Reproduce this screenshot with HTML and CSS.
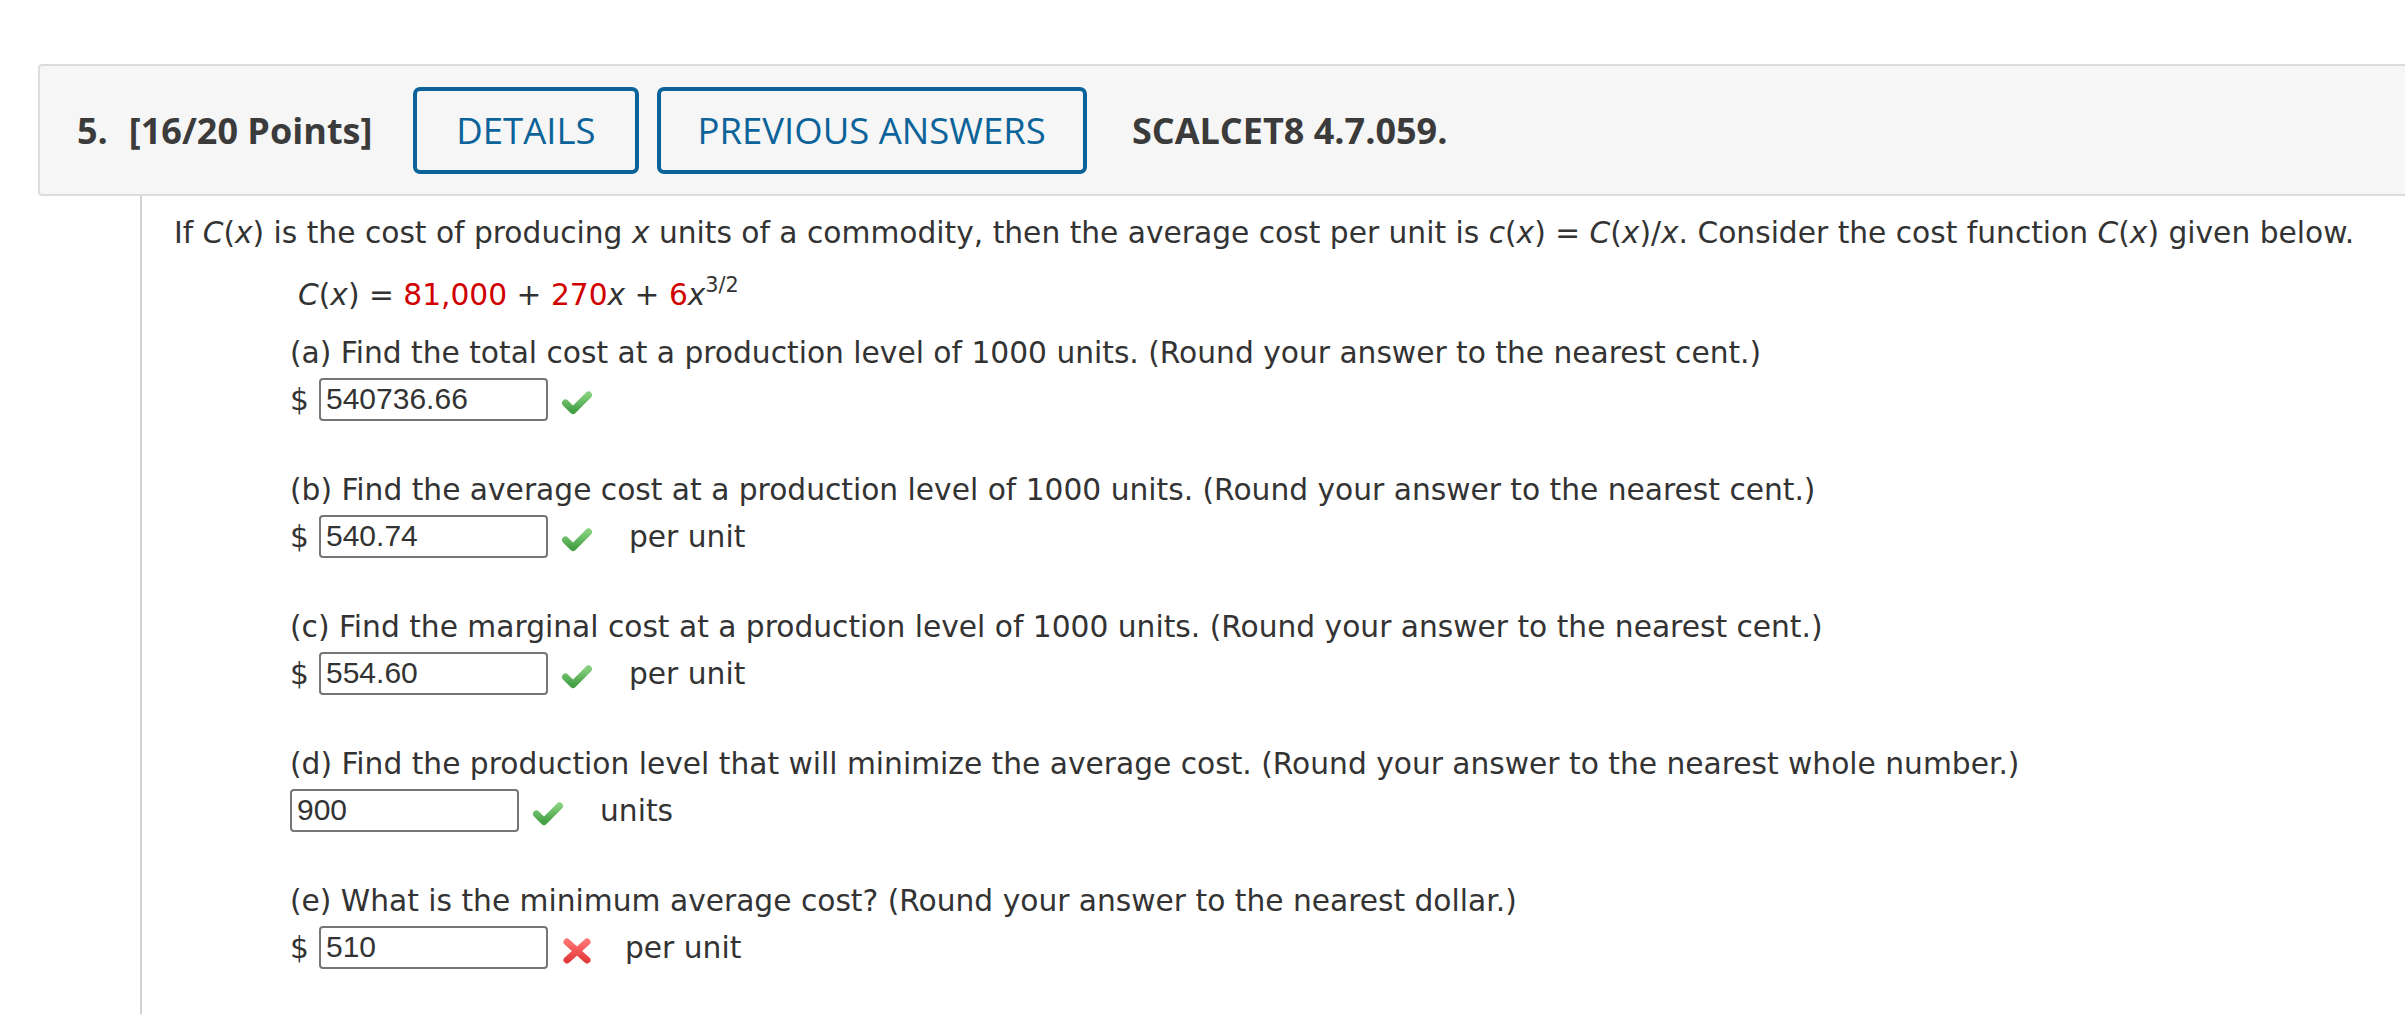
FILE: index.html
```html
<!DOCTYPE html>
<html lang="en">
<head>
    <meta charset="UTF-8">
    <meta name="viewport" content="width=device-width, initial-scale=1.0">
    <title>SCALCET8 4.7.059</title>
    <link rel="stylesheet" href="styles.css">
</head>
<body>
    <div class="question">
        <div class="q-header">
            <span class="q-num">5.</span>
            <span class="q-points">[16/20 Points]</span>
            <button class="q-btn">DETAILS</button>
            <button class="q-btn last">PREVIOUS ANSWERS</button>
            <span class="q-ref">SCALCET8 4.7.059.</span>
        </div>

        <div class="q-body">
            <p class="intro">If <i>C</i>(<i>x</i>) is the cost of producing <i>x</i> units of a commodity, then the average cost per unit is <i>c</i>(<i>x</i>) = <i>C</i>(<i>x</i>)/<i>x</i>. Consider the cost function <i>C</i>(<i>x</i>) given below.</p>

            <p class="formula"><i>C</i>(<i>x</i>) = <span class="num">81,000</span> + <span class="num">270</span><i>x</i> + <span class="num">6</span><i>x</i><sup>3/2</sup></p>

            <div class="parts">
                <div class="part">
                    <p class="prompt">(a) Find the total cost at a production level of 1000 units. (Round your answer to the nearest cent.)</p>
                    <div class="answer-row">
                        <span class="pre">$</span>
                        <input class="answer" type="text" value="540736.66" readonly>
                        <svg class="mark" width="32" height="26" viewBox="0 0 32 26"><use href="#check"/></svg>
                    </div>
                </div>

                <div class="part">
                    <p class="prompt">(b) Find the average cost at a production level of 1000 units. (Round your answer to the nearest cent.)</p>
                    <div class="answer-row">
                        <span class="pre">$</span>
                        <input class="answer" type="text" value="540.74" readonly>
                        <svg class="mark" width="32" height="26" viewBox="0 0 32 26"><use href="#check"/></svg>
                        <span class="post">per unit</span>
                    </div>
                </div>

                <div class="part">
                    <p class="prompt">(c) Find the marginal cost at a production level of 1000 units. (Round your answer to the nearest cent.)</p>
                    <div class="answer-row">
                        <span class="pre">$</span>
                        <input class="answer" type="text" value="554.60" readonly>
                        <svg class="mark" width="32" height="26" viewBox="0 0 32 26"><use href="#check"/></svg>
                        <span class="post">per unit</span>
                    </div>
                </div>

                <div class="part">
                    <p class="prompt">(d) Find the production level that will minimize the average cost. (Round your answer to the nearest whole number.)</p>
                    <div class="answer-row">
                        <input class="answer" type="text" value="900" readonly>
                        <svg class="mark" width="32" height="26" viewBox="0 0 32 26"><use href="#check"/></svg>
                        <span class="post">units</span>
                    </div>
                </div>

                <div class="part">
                    <p class="prompt">(e) What is the minimum average cost? (Round your answer to the nearest dollar.)</p>
                    <div class="answer-row">
                        <span class="pre">$</span>
                        <input class="answer" type="text" value="510" readonly>
                        <svg class="mark wrong" width="32" height="30" viewBox="0 0 32 30"><use href="#cross"/></svg>
                        <span class="post">per unit</span>
                    </div>
                </div>
            </div>
        </div>
    </div>

    <svg class="defs" width="0" height="0">
        <defs>
            <linearGradient id="green" x1="0" y1="0" x2="0" y2="1">
                <stop offset="0" stop-color="#84cf7c"/>
                <stop offset="1" stop-color="#46a046"/>
            </linearGradient>
            <linearGradient id="red" x1="0" y1="0" x2="0" y2="1">
                <stop offset="0" stop-color="#ff7070"/>
                <stop offset="1" stop-color="#e43c3c"/>
            </linearGradient>
            <g id="check">
                <polyline points="4.5,13 12,20.5 27.5,5" fill="none" stroke="url(#green)" stroke-width="7" stroke-linecap="round" stroke-linejoin="round"/>
            </g>
            <g id="cross">
                <path d="M6 6 L26 24 M26 6 L6 24" fill="none" stroke="url(#red)" stroke-width="7" stroke-linecap="round"/>
            </g>
        </defs>
    </svg>
</body>
</html>
```

FILE: styles.css
```css
:root {
    --text-color: #333;
    --header-text: #3b3b3b;
    --header-bg: #f6f6f6;
    --header-border: #dcdcdc;
    --btn-blue: #0b6399;
    --rule-color: #d2d2d2;
    --num-red: #d10000;
}

body {
    margin: 0;
    background: #fff;
    color: var(--text-color);
    font-family: "DejaVu Sans", Verdana, sans-serif;
    font-size: 29.7px;
    overflow: hidden;
}

.question {
    padding: 64px 0 0 38px;
}

.q-header {
    display: flex;
    align-items: center;
    height: 128px;
    padding-left: 37px;
    background: var(--header-bg);
    border: 2px solid var(--header-border);
    border-right: none;
    border-radius: 4px 0 0 4px;
    font-family: "Open Sans", sans-serif;
    font-size: 36px;
    color: var(--header-text);
}

.q-num,
.q-points,
.q-ref {
    font-weight: 700;
}

.q-num {
    margin-right: 21px;
}

.q-points {
    margin-right: 41px;
}

.q-btn {
    height: 87px;
    box-sizing: border-box;
    padding: 0 39px;
    margin-right: 18px;
    background: transparent;
    border: 4px solid var(--btn-blue);
    border-radius: 7px;
    color: var(--btn-blue);
    font-family: "Open Sans", sans-serif;
    font-size: 36.5px;
    font-weight: 400;
}

.q-btn.last {
    padding: 0 37px;
    margin-right: 45px;
}

.q-body {
    box-sizing: border-box;
    min-height: calc(100vh - 196px);
    margin-left: 102px;
    padding: 15px 0 0 32px;
    border-left: 2px solid var(--rule-color);
}

.intro {
    margin: 0;
    line-height: 44px;
    white-space: nowrap;
}

.formula {
    margin: 18px 0 0 124px;
    line-height: 44px;
}

.formula .num {
    color: var(--num-red);
}

.formula sup {
    font-size: 70%;
    line-height: 0;
    vertical-align: 0.62em;
}

.parts {
    margin: 14px 0 0 116px;
}

.part {
    margin-bottom: 46px;
}

.part:last-child {
    margin-bottom: 0;
}

.prompt {
    margin: 0;
    line-height: 44px;
    white-space: nowrap;
}

.answer-row {
    display: flex;
    align-items: center;
    height: 46px;
    margin-top: 1px;
}

.pre {
    width: 19px;
    margin-right: 10px;
}

.answer {
    width: 229px;
    height: 43px;
    box-sizing: border-box;
    margin: 0;
    padding: 0 5px;
    border: 2px solid #767676;
    border-radius: 4px;
    background: #fff;
    color: var(--text-color);
    font-family: "Liberation Sans", Arial, sans-serif;
    font-size: 30px;
    outline: none;
}

.mark {
    margin: 8px 36px 0 13px;
    flex-shrink: 0;
}

.mark.wrong {
    margin-right: 32px;
}

.defs {
    position: absolute;
    width: 0;
    height: 0;
}
```
